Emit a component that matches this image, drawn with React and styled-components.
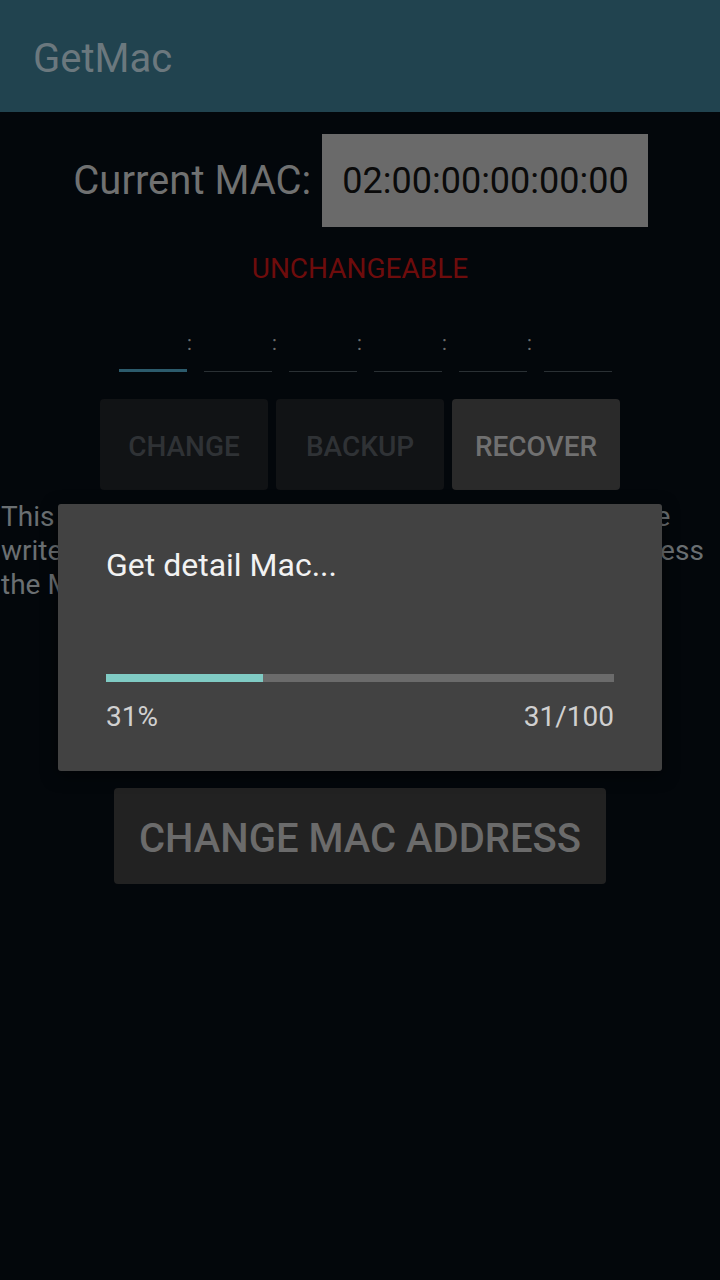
import React from "react";
import styled, { createGlobalStyle } from "styled-components";

const Global = createGlobalStyle`
  html, body { margin: 0; padding: 0; background: #03070b; }
  body { font-family: Roboto, "Noto Sans", "Liberation Sans", sans-serif; }
  * { box-sizing: border-box; }
`;

const Screen = styled.div`
  position: relative;
  width: 720px;
  height: 1280px;
  overflow: hidden;
  background: #03070b;
`;

const AppBar = styled.header`
  height: 112px;
  background: #21434f;
  display: flex;
  align-items: center;
  padding: 5px 0 0 33px;
`;

const Title = styled.h1`
  margin: 0;
  font-size: 40px;
  font-weight: 400;
  color: #6b787e;
  line-height: 1;
`;

const Content = styled.main`
  display: flex;
  flex-direction: column;
  align-items: center;
  padding-top: 22px;
`;

const MacRow = styled.div`
  display: flex;
  align-items: center;
  gap: 11px;
  padding-left: 1px;
`;

const MacLabel = styled.span`
  font-size: 40px;
  color: #707171;
`;

const MacValue = styled.div`
  height: 93px;
  padding: 0 19px 0 20px;
  display: flex;
  align-items: center;
  background: #6a6a6a;
  color: #0a0a0a;
  font-size: 36px;
`;

const Status = styled.div`
  margin-top: 25px;
  font-size: 28px;
  line-height: 33px;
  color: #6e0c0c;
`;

const FieldRow = styled.div`
  margin-top: 34px;
  display: flex;
  padding-left: 11px;
`;

const Field = styled.div`
  width: 68px;
  height: 53px;
  border-bottom: ${(p) => (p.$active ? "3px solid #2c5b6c" : "1px solid #2a3034")};
  margin-bottom: ${(p) => (p.$active ? "0" : "1px")};
`;

const Colon = styled.span`
  width: 17px;
  text-align: left;
  font-size: 20px;
  line-height: 20px;
  padding-top: 14px;
  color: #6a6a6a;
`;

const ButtonRow = styled.div`
  margin-top: 26px;
  display: flex;
  gap: 8px;
`;

const SmallButton = styled.button`
  width: 168px;
  height: 91px;
  padding-top: 4px;
  border: none;
  border-radius: 4px;
  font-family: inherit;
  font-size: 28px;
  font-weight: 500;
  background: ${(p) => (p.$enabled ? "#2a2a2a" : "#111315")};
  color: ${(p) => (p.$enabled ? "#707070" : "#2f3235")};
`;

const Paragraph = styled.p`
  align-self: stretch;
  margin: 10px 0 0;
  padding-left: 1px;
  font-size: 28px;
  line-height: 34px;
  color: #6a6f72;
  white-space: nowrap;
`;

const BigButton = styled.button`
  margin-top: 186px;
  width: 492px;
  height: 96px;
  padding-top: 5px;
  border: none;
  border-radius: 4px;
  background: #222222;
  color: #6b6b6b;
  font-family: inherit;
  font-size: 40px;
  font-weight: 500;
`;

const Scrim = styled.div`
  position: absolute;
  inset: 0;
  display: flex;
  align-items: center;
  justify-content: center;
  padding-bottom: 6px;
`;

const Dialog = styled.div`
  width: 604px;
  height: 267px;
  background: #424242;
  border-radius: 3px;
  padding: 42px 48px 0;
  box-shadow: 0 4px 16px rgba(0, 0, 0, 0.5);
`;

const DialogTitle = styled.div`
  font-size: 32px;
  line-height: 38px;
  color: #f2f2f2;
`;

const Track = styled.div`
  margin-top: 90px;
  height: 8px;
  background: #6b6b6b;
`;

const Fill = styled.div`
  height: 100%;
  background: #80cbc4;
`;

const Counts = styled.div`
  margin-top: 18px;
  display: flex;
  justify-content: space-between;
  font-size: 28px;
  line-height: 33px;
  color: #d0d0d0;
`;

export default function App() {
  const progress = 31;
  const fields = [0, 1, 2, 3, 4, 5];
  return (
    <>
      <Global />
      <Screen>
        <AppBar>
          <Title>GetMac</Title>
        </AppBar>
        <Content>
          <MacRow>
            <MacLabel>Current MAC:</MacLabel>
            <MacValue>02:00:00:00:00:00</MacValue>
          </MacRow>
          <Status>UNCHANGEABLE</Status>
          <FieldRow>
            {fields.map((i) => (
              <React.Fragment key={i}>
                <Field $active={i === 0} />
                {i < 5 && <Colon>:</Colon>}
              </React.Fragment>
            ))}
          </FieldRow>
          <ButtonRow>
            <SmallButton>CHANGE</SmallButton>
            <SmallButton>BACKUP</SmallButton>
            <SmallButton $enabled>RECOVER</SmallButton>
          </ButtonRow>
          <Paragraph>
            This operation requires root access, please make sure
            <br />
            write permission is granted, otherwise we cannot access
            <br />
            the MAC address file of your device.
          </Paragraph>
          <BigButton>CHANGE MAC ADDRESS</BigButton>
        </Content>
        <Scrim>
          <Dialog>
            <DialogTitle>Get detail Mac...</DialogTitle>
            <Track>
              <Fill style={{ width: `${progress}%` }} />
            </Track>
            <Counts>
              <span>{progress}%</span>
              <span>{progress}/100</span>
            </Counts>
          </Dialog>
        </Scrim>
      </Screen>
    </>
  );
}
